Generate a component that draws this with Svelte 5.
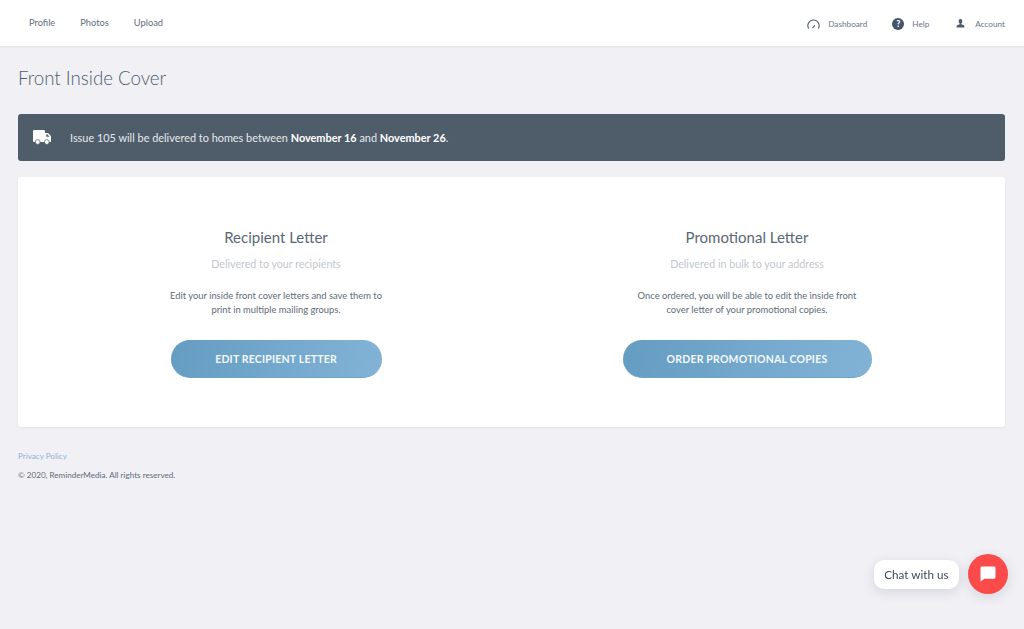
<script>
	const columns = [
		{
			title: 'Recipient Letter',
			sub: 'Delivered to your recipients',
			lines: ['Edit your inside front cover letters and save them to', 'print in multiple mailing groups.'],
			cta: 'Edit recipient letter',
			width: 211
		},
		{
			title: 'Promotional Letter',
			sub: 'Delivered in bulk to your address',
			lines: ['Once ordered, you will be able to edit the inside front', 'cover letter of your promotional copies.'],
			cta: 'Order promotional copies',
			width: 249
		}
	];
</script>

<header class="topbar">
	<nav class="nav-left">
		<a href="#profile">Profile</a>
		<a href="#photos">Photos</a>
		<a href="#upload">Upload</a>
	</nav>
	<nav class="nav-right">
		<a href="#dashboard" class="dash">
			<svg width="13" height="10" viewBox="0 0 13 10" fill="none" stroke="#4f5d6b" stroke-width="1.1" stroke-linecap="round">
				<path d="M1.5 9.2A5.6 5.6 0 0 1 6.5 1a5.6 5.6 0 0 1 5 8.2" />
				<path d="M5.8 8.6 7.6 6.6" />
			</svg>
			Dashboard
		</a>
		<a href="#help" class="help">
			<span class="help-icon">?</span>
			Help
		</a>
		<a href="#account" class="account">
			<svg width="9" height="9" viewBox="0 0 9 9" fill="#4f5d6b">
				<path d="M4.500 0C3.300 0 2.700.9 2.700 2.200c0 .9.300 1.700.9 2.200v.8L1.200 6.300C.7 6.600.5 7.300.5 8.500h8c0-1.200-.2-1.900-.7-2.200L5.400 5.200v-.8c.6-.5.9-1.300.9-2.200C6.300.9 5.700 0 4.500 0Z" />
			</svg>
			Account
		</a>
	</nav>
</header>

<main class="page">
	<h1>Front Inside Cover</h1>

	<div class="banner">
		<svg width="18" height="15" viewBox="0 0 18 15">
			<path fill="#fff" fill-rule="evenodd" d="M1.300 0h9.400c.7 0 1.300.6 1.300 1.300V3h2.500c.4 0 .7.100 1 .4l2 2.100c.3.300.5.700.5 1.100V11c0 .6-.4 1-1 1H1.300C.6 12 0 11.400 0 10.700V1.300C0 .6.600 0 1.300 0ZM13.300 4.300v2.400h3.200l-2.200-2.400Z" />
			<circle cx="4.700" cy="12" r="2.400" fill="#fff" stroke="#4f5d6b" stroke-width="0.7" />
			<circle cx="13.800" cy="12" r="2.400" fill="#fff" stroke="#4f5d6b" stroke-width="0.7" />
		</svg>
		<p>Issue 105 will be delivered to homes between <b>November 16</b> and <b>November 26</b>.</p>
	</div>

	<section class="card">
		{#each columns as col}
			<div class="col">
				<h2>{col.title}</h2>
				<p class="sub">{col.sub}</p>
				<p class="desc">{col.lines[0]}<br />{col.lines[1]}</p>
				<button style="width: {col.width}px">{col.cta}</button>
			</div>
		{/each}
	</section>

	<footer>
		<a href="#privacy">Privacy Policy</a>
		<p>© 2020, ReminderMedia. All rights reserved.</p>
	</footer>
</main>

<div class="chat">
	<span class="chat-label">Chat with us</span>
	<span class="chat-btn">
		<svg width="16" height="16" viewBox="0 0 16 16" fill="#fff">
			<path d="M2 .5h12c.9 0 1.500.6 1.500 1.500v9.200c0 .9-.6 1.500-1.500 1.500H4.500L.5 15.500V2C.5 1.100 1.100.5 2 .5Z" />
		</svg>
	</span>
</div>

<style>
	:global(body) {
		background: #f0f0f5;
		font-family: Lato, 'Open Sans', sans-serif;
		color: #4f5d6b;
	}

	a {
		color: inherit;
		text-decoration: none;
	}

	.topbar {
		display: flex;
		align-items: center;
		justify-content: space-between;
		height: 46px;
		padding: 0 19px 0 29px;
		background: #fff;
		box-shadow: 0 1px 2px rgb(0 0 0 / 0.08);
	}

	.nav-left {
		display: flex;
		gap: 25px;
		font-size: 9.300px;
		color: #5f6c79;
		margin-top: -1px;
	}

	.nav-right {
		display: flex;
		align-items: center;
		font-size: 8.200px;
		color: #6a7683;
		margin-top: 1px;
	}

	.nav-right a {
		display: flex;
		align-items: center;
	}

	.dash {
		gap: 8px;
		margin-right: 25px;
	}

	.help {
		gap: 8px;
		margin-right: 27px;
	}

	.account {
		gap: 10px;
	}

	.help-icon {
		display: flex;
		align-items: center;
		justify-content: center;
		width: 12px;
		height: 12px;
		border-radius: 50%;
		background: #44546a;
		color: #fff;
		font-size: 9px;
		font-weight: 900;
	}

	.page {
		padding: 0 19px 0 18px;
	}

	h1 {
		margin: 0;
		padding-top: 21px;
		font-size: 18.700px;
		line-height: 22px;
		font-weight: 300;
		color: #4f5d6b;
	}

	.banner {
		display: flex;
		align-items: center;
		gap: 19px;
		height: 47px;
		margin-top: 25px;
		padding-left: 15px;
		border-radius: 3px;
		background: #4f5d6b;
		color: #e6e9ec;
		font-size: 10.900px;
	}

	.banner p {
		margin: 0;
	}

	.banner b {
		color: #fff;
	}

	.card {
		display: grid;
		grid-template-columns: 516px 1fr;
		height: 250px;
		margin-top: 16px;
		border-radius: 3px;
		background: #fff;
		box-shadow: 0 1px 3px rgb(0 0 0 / 0.06);
	}

	.col {
		display: flex;
		flex-direction: column;
		align-items: center;
		text-align: center;
		padding-top: 51px;
	}

	.col:last-child {
		padding-right: 45px;
	}

	h2 {
		margin: 0;
		font-size: 15px;
		line-height: 18px;
		font-weight: 400;
		color: #5a6773;
	}

	.sub {
		margin: 11px 0 0;
		font-size: 10.700px;
		line-height: 14px;
		color: #c3c7cc;
	}

	.desc {
		margin: 18px 0 0;
		font-size: 9.400px;
		line-height: 14px;
		color: #5f6c79;
	}

	button {
		height: 38px;
		margin-top: 23px;
		border: 0;
		border-bottom: 1px solid #6ba3c9;
		border-radius: 19px;
		background: linear-gradient(100deg, #659cc2, #82b3d6);
		color: #f4f8fb;
		font-family: inherit;
		font-size: 10.500px;
		font-weight: 700;
		text-transform: uppercase;
		letter-spacing: 0.2px;
	}

	footer {
		margin-top: 23px;
		font-size: 8.100px;
		line-height: 12px;
	}

	footer a {
		color: #8db5d6;
	}

	footer p {
		margin: 7px 0 0;
		color: #5f6c79;
	}

	/* Chat widget floats over the page, pinned to the corner. */
	.chat {
		position: fixed;
		right: 16px;
		bottom: 35px;
		display: flex;
		align-items: center;
		gap: 9px;
	}

	.chat-label {
		display: flex;
		align-items: center;
		height: 29px;
		padding: 0 10.500px;
		border-radius: 10px;
		background: #fff;
		box-shadow: 0 3px 12px rgb(60 60 90 / 0.15);
		font-size: 11.700px;
		color: #3f4a57;
	}

	.chat-btn {
		display: flex;
		align-items: center;
		justify-content: center;
		width: 40px;
		height: 40px;
		border-radius: 50%;
		background: #fa4a4a;
		box-shadow: 0 3px 12px rgb(60 60 90 / 0.15);
	}
</style>
